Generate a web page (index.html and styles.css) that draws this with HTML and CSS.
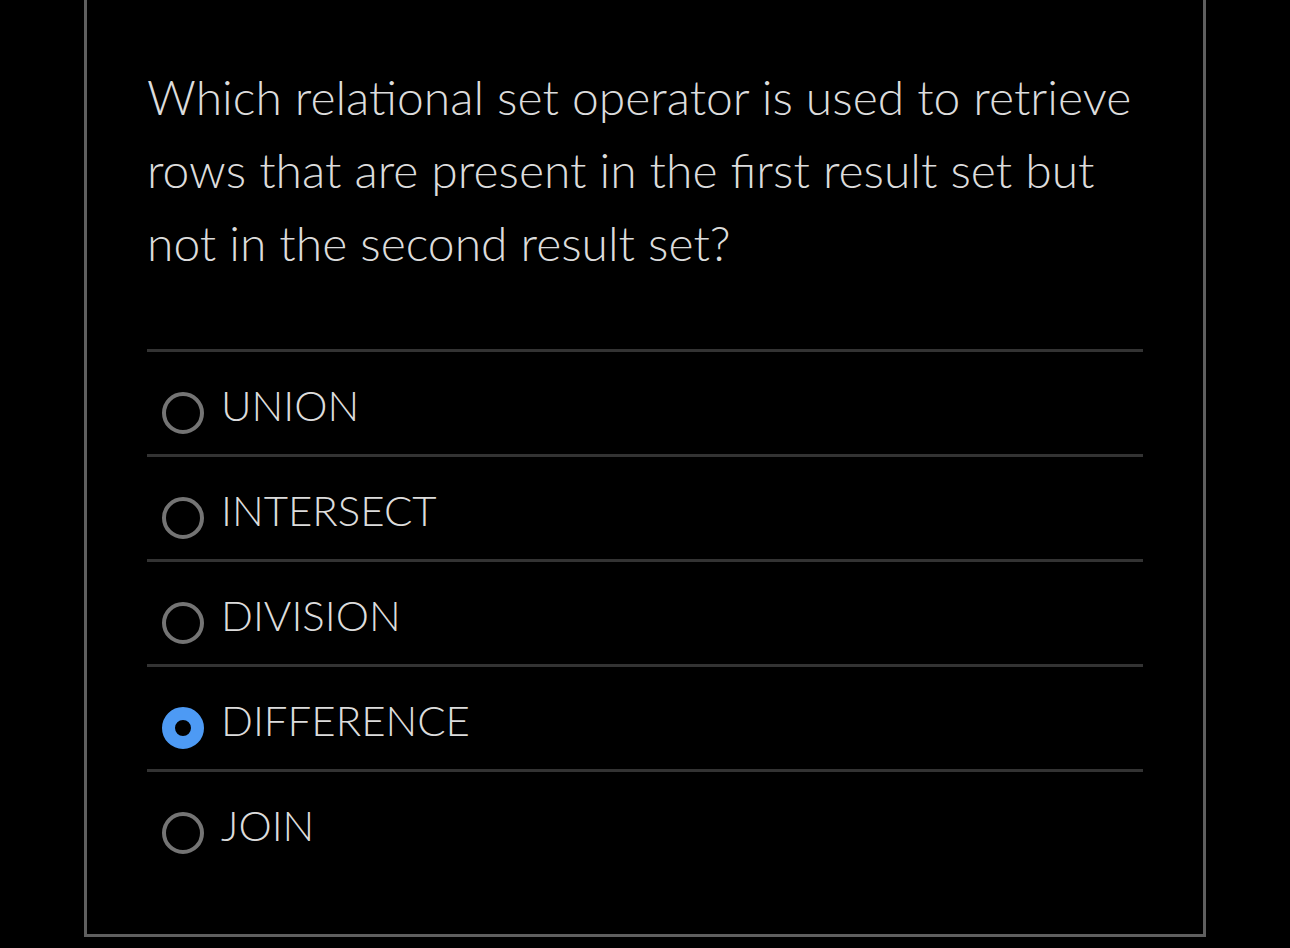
FILE: index.html
```html
<!DOCTYPE html>
<html lang="en">
<head>
<meta charset="utf-8">
<title>Quiz question</title>
<link rel="stylesheet" href="styles.css">
</head>
<body>
<div class="card">
  <p class="question">Which relational set operator is used to retrieve rows that are present in the first result set but not in the second result set?</p>
  <ul class="options">
    <li class="option"><span class="radio"></span><span class="label">UNION</span></li>
    <li class="option"><span class="radio"></span><span class="label">INTERSECT</span></li>
    <li class="option"><span class="radio"></span><span class="label">DIVISION</span></li>
    <li class="option selected"><span class="radio"></span><span class="label">DIFFERENCE</span></li>
    <li class="option"><span class="radio"></span><span class="label">JOIN</span></li>
  </ul>
</div>
</body>
</html>
```

FILE: styles.css
```css
html, body {
  margin: 0;
  padding: 0;
  background: #000;
}

body {
  font-family: "Lato", "Liberation Sans", sans-serif;
  color: #dcdcdc;
}

.card {
  margin: 0 84px;
  border: 3px solid #5f5f5f;
  border-top: none;
  padding: 60px 60px 60px 60px;
}

.question {
  margin: 0;
  font-size: 48px;
  font-weight: 300;
  line-height: 73px;
}

.options {
  list-style: none;
  margin: 70px 0 0;
  padding: 0;
}

.option {
  display: flex;
  align-items: flex-start;
  border-top: 3px solid #333;
  padding: 27px 0 22px 15px;
  height: 53px;
}

.radio {
  flex: none;
  box-sizing: border-box;
  width: 42px;
  height: 42px;
  margin-top: 13px;
  border: 4px solid #747474;
  border-radius: 50%;
}

.selected .radio {
  border: 13px solid #4d9af4;
  background: #000;
}

.label {
  margin-left: 17px;
  font-size: 42px;
  font-weight: 300;
  line-height: 53px;
}
```
